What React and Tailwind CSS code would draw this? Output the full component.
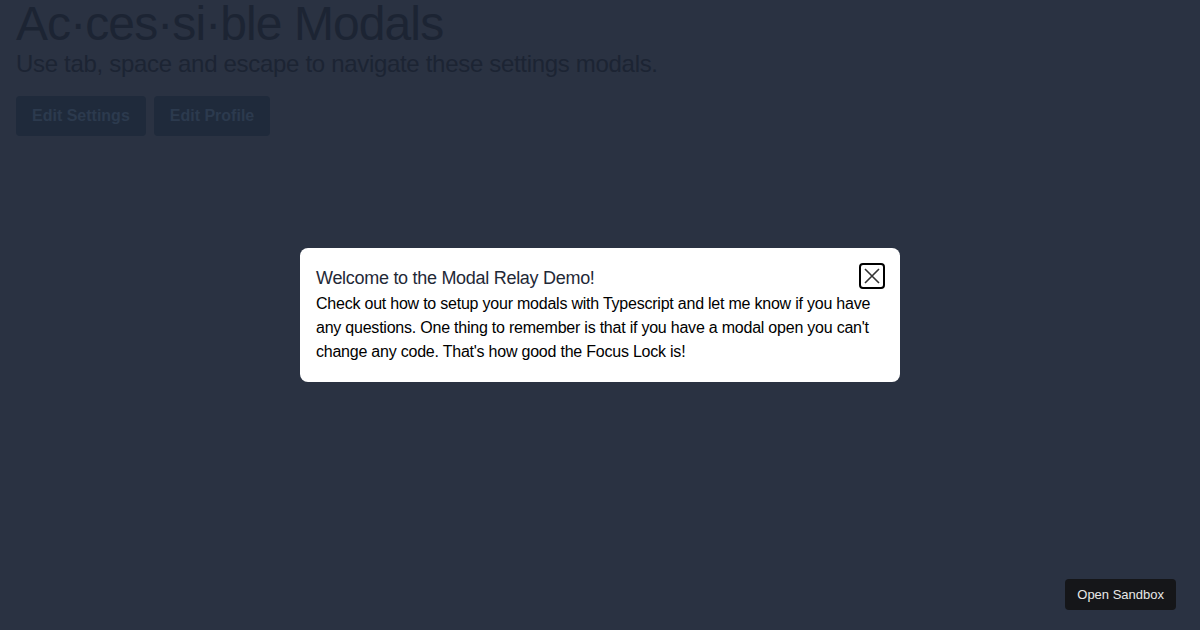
import React from "react";

const CloseIcon = () => (
  <svg width="18" height="18" viewBox="0 0 18 18" fill="none">
    <path d="M2 2 L16 16 M16 2 L2 16" stroke="#333" strokeWidth="1.6" />
  </svg>
);

const App = () => {
  return (
    <div
      className="relative w-[1200px] h-[630px] overflow-hidden bg-[#2a3242]"
      style={{ fontFamily: '"Liberation Sans", Arial, sans-serif' }}
    >
      <div className="px-4">
        <h1 className="text-[48px] leading-[48px] tracking-[-0.019em] text-[#1c2433] m-0">
          Ac·ces·si·ble Modals
        </h1>
        <p className="text-2xl leading-8 tracking-[-0.013em] text-[#1c2433]">
          Use tab, space and escape to navigate these settings modals.
        </p>
        <div className="flex gap-2 mt-4">
          <button className="px-4 h-10 rounded bg-[#1f2a3b] text-[#2c3a4e] font-bold text-base">
            Edit Settings
          </button>
          <button className="px-4 h-10 rounded bg-[#1f2a3b] text-[#2c3a4e] font-bold text-base">
            Edit Profile
          </button>
        </div>
      </div>

      <div className="absolute inset-0 flex items-center justify-center">
        <div className="relative w-[600px] bg-white rounded-lg px-4 pt-4 pb-[18px]">
          <h2 className="text-lg leading-7 tracking-[-0.016em] text-[#1f2937]">
            Welcome to the Modal Relay Demo!
          </h2>
          <p className="text-base leading-6 tracking-[-0.014em] text-black">
            Check out how to setup your modals with Typescript and let me know
            if you have any questions. One thing to remember is that if you have
            a modal open you can't change any code. That's how good the Focus
            Lock is!
          </p>
          <button className="absolute top-[15px] right-[15px] w-[26px] h-[26px] border-2 border-black rounded flex items-center justify-center">
            <CloseIcon />
          </button>
        </div>
      </div>

      <div className="absolute right-6 bottom-5 h-[31px] px-3 flex items-center rounded bg-[#151619] text-[13px] text-[#e8e8e8]">
        Open Sandbox
      </div>
    </div>
  );
};

export default App;
